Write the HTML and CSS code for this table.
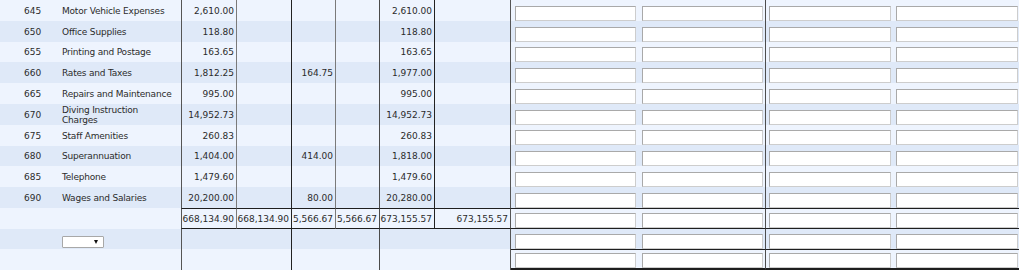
FILE: index.html
```html
<!DOCTYPE html>
<html lang="en">
<head>
<meta charset="utf-8">
<title>Trial balance worksheet</title>
<link rel="stylesheet" href="styles.css">
</head>
<body>
<div class="sheet">
  <table class="ledger">
    <colgroup>
      <col class="w-code"><col class="w-desc"><col class="w-amt"><col class="w-amt"><col class="w-narrow"><col class="w-narrow"><col class="w-amt"><col class="w-wide">
    </colgroup>
    <tbody>
      <tr class="light"><td class="code">645</td><td class="desc">Motor Vehicle Expenses</td><td class="num b1">2,610.00</td><td class="num b2"></td><td class="num b3"></td><td class="num b4"></td><td class="num b5">2,610.00</td><td class="num b6"></td></tr>
      <tr class="dark"><td class="code">650</td><td class="desc">Office Supplies</td><td class="num b1">118.80</td><td class="num b2"></td><td class="num b3"></td><td class="num b4"></td><td class="num b5">118.80</td><td class="num b6"></td></tr>
      <tr class="light"><td class="code">655</td><td class="desc">Printing and Postage</td><td class="num b1">163.65</td><td class="num b2"></td><td class="num b3"></td><td class="num b4"></td><td class="num b5">163.65</td><td class="num b6"></td></tr>
      <tr class="dark"><td class="code">660</td><td class="desc">Rates and Taxes</td><td class="num b1">1,812.25</td><td class="num b2"></td><td class="num b3">164.75</td><td class="num b4"></td><td class="num b5">1,977.00</td><td class="num b6"></td></tr>
      <tr class="light"><td class="code">665</td><td class="desc">Repairs and Maintenance</td><td class="num b1">995.00</td><td class="num b2"></td><td class="num b3"></td><td class="num b4"></td><td class="num b5">995.00</td><td class="num b6"></td></tr>
      <tr class="dark"><td class="code">670</td><td class="desc">Diving Instruction Charges</td><td class="num b1">14,952.73</td><td class="num b2"></td><td class="num b3"></td><td class="num b4"></td><td class="num b5">14,952.73</td><td class="num b6"></td></tr>
      <tr class="light"><td class="code">675</td><td class="desc">Staff Amenities</td><td class="num b1">260.83</td><td class="num b2"></td><td class="num b3"></td><td class="num b4"></td><td class="num b5">260.83</td><td class="num b6"></td></tr>
      <tr class="dark"><td class="code">680</td><td class="desc">Superannuation</td><td class="num b1">1,404.00</td><td class="num b2"></td><td class="num b3">414.00</td><td class="num b4"></td><td class="num b5">1,818.00</td><td class="num b6"></td></tr>
      <tr class="light"><td class="code">685</td><td class="desc">Telephone</td><td class="num b1">1,479.60</td><td class="num b2"></td><td class="num b3"></td><td class="num b4"></td><td class="num b5">1,479.60</td><td class="num b6"></td></tr>
      <tr class="dark"><td class="code">690</td><td class="desc">Wages and Salaries</td><td class="num b1">20,200.00</td><td class="num b2"></td><td class="num b3">80.00</td><td class="num b4"></td><td class="num b5">20,280.00</td><td class="num b6"></td></tr>
      <tr class="light total"><td class="code"></td><td class="desc"></td><td class="num b1">668,134.90</td><td class="num b2">668,134.90</td><td class="num b3">5,566.67</td><td class="num b4">5,566.67</td><td class="num b5">673,155.57</td><td class="num b6">673,155.57</td></tr>
      <tr class="dark"><td class="code"></td><td class="desc pick"><span class="select" role="combobox" aria-label="Account"><span class="caret"></span></span></td><td class="b1" colspan="2"></td><td class="b3" colspan="2"></td><td class="b5 b6" colspan="2"></td></tr>
      <tr class="light"><td class="code"></td><td class="desc"></td><td class="b1" colspan="2"></td><td class="b3" colspan="2"></td><td class="b5 b6" colspan="2"></td></tr>
    </tbody>
  </table>

  <table class="entry">
    <colgroup><col class="e-a"><col class="e-b"><col class="e-c"><col class="e-d"></colgroup>
    <tbody>
      <tr class="light"><td class="ea"><input type="text"></td><td class="eb"><input type="text"></td><td class="ec"><input type="text"></td><td class="ed"><input type="text"></td></tr>
      <tr class="dark"><td class="ea"><input type="text"></td><td class="eb"><input type="text"></td><td class="ec"><input type="text"></td><td class="ed"><input type="text"></td></tr>
      <tr class="light"><td class="ea"><input type="text"></td><td class="eb"><input type="text"></td><td class="ec"><input type="text"></td><td class="ed"><input type="text"></td></tr>
      <tr class="dark"><td class="ea"><input type="text"></td><td class="eb"><input type="text"></td><td class="ec"><input type="text"></td><td class="ed"><input type="text"></td></tr>
      <tr class="light"><td class="ea"><input type="text"></td><td class="eb"><input type="text"></td><td class="ec"><input type="text"></td><td class="ed"><input type="text"></td></tr>
      <tr class="dark"><td class="ea"><input type="text"></td><td class="eb"><input type="text"></td><td class="ec"><input type="text"></td><td class="ed"><input type="text"></td></tr>
      <tr class="light"><td class="ea"><input type="text"></td><td class="eb"><input type="text"></td><td class="ec"><input type="text"></td><td class="ed"><input type="text"></td></tr>
      <tr class="dark"><td class="ea"><input type="text"></td><td class="eb"><input type="text"></td><td class="ec"><input type="text"></td><td class="ed"><input type="text"></td></tr>
      <tr class="light"><td class="ea"><input type="text"></td><td class="eb"><input type="text"></td><td class="ec"><input type="text"></td><td class="ed"><input type="text"></td></tr>
      <tr class="dark"><td class="ea"><input type="text"></td><td class="eb"><input type="text"></td><td class="ec"><input type="text"></td><td class="ed"><input type="text"></td></tr>
      <tr class="light rule"><td class="ea"><input type="text"></td><td class="eb"><input type="text"></td><td class="ec"><input type="text"></td><td class="ed"><input type="text"></td></tr>
      <tr class="dark rule"><td class="ea"><input type="text"></td><td class="eb"><input type="text"></td><td class="ec"><input type="text"></td><td class="ed"><input type="text"></td></tr>
      <tr class="light rule last"><td class="ea"><input type="text"></td><td class="eb"><input type="text"></td><td class="ec"><input type="text"></td><td class="ed"><input type="text"></td></tr>
    </tbody>
  </table>
</div>
</body>
</html>
```

FILE: styles.css
```css
* { box-sizing: border-box; }

html, body {
  margin: 0;
  padding: 0;
  background: #ffffff;
}

body {
  font-family: "DejaVu Sans", Verdana, sans-serif;
  font-size: 9px;
  color: #2b2b2b;
}

.sheet {
  display: flex;
  align-items: flex-start;
}

table {
  border-collapse: separate;
  border-spacing: 0;
  table-layout: fixed;
}

tr { height: 20.75px; }

tr.light td { background: #eef4fe; }
tr.dark td { background: #dfe9f8; }

/* ---------- ledger (left) ---------- */
.ledger { width: 511px; }

.w-code { width: 60px; }
.w-desc { width: 121px; }
.w-amt { width: 55px; }
.w-narrow { width: 44px; }
.w-wide { width: 77px; }

.ledger td {
  padding: 1px 2px 0 0;
  vertical-align: middle;
  line-height: 10px;
  white-space: nowrap;
}

.ledger td.code { padding-left: 24px; }

.ledger td.desc {
  padding-left: 2px;
  padding-right: 6px;
  white-space: normal;
  letter-spacing: -0.2px;
}

.ledger td.num { text-align: right; }

.b1 { border-left: 1px solid #555555; }
.b2 { border-left: 1px solid #7a7a7a; }
.b3 { border-left: 1px solid #222222; }
.b4 { border-left: 1px solid #7a7a7a; }
.b5 { border-left: 1px solid #4a4a4a; }
.b6 { border-left: 1px solid #222222; border-right: 1px solid #555555; }
td.b5.b6 { border-left-color: #4a4a4a; }

.ledger tr.total td.num {
  border-top: 1px solid #1e1e1e;
  border-bottom: 1px solid #1e1e1e;
}

.ledger td.pick {
  vertical-align: bottom;
  padding-bottom: 1px;
}

.select {
  display: flex;
  align-items: center;
  justify-content: flex-end;
  width: 42px;
  height: 12px;
  padding-right: 5px;
  background: #ffffff;
  border: 1px solid #a8a8a8;
  border-radius: 1px;
}

.caret {
  width: 0;
  height: 0;
  border-left: 2.5px solid transparent;
  border-right: 2.5px solid transparent;
  border-top: 4px solid #111111;
}

/* ---------- entry grid (right) ---------- */
.entry { width: 508px; }

.e-a { width: 128px; }
.e-b { width: 126px; }
.e-c { width: 128px; }
.e-d { width: 126px; }

.entry td {
  padding: 0 0 0 3px;
  vertical-align: bottom;
}

.entry td.ea { padding-left: 4px; }
.entry td.ec { border-left: 1px solid #4d4d4d; }

.entry input {
  display: block;
  width: 121px;
  height: 15px;
  margin: 0;
  padding: 0 2px;
  font: inherit;
  background: #ffffff;
  border: 1px solid;
  border-color: #a9a9a9 #cdcdcd #cdcdcd #a9a9a9;
  border-radius: 0;
}

.entry td.ec input,
.entry td.ed input { width: 122px; }

.entry tr.rule td { border-top: 1px solid #1e1e1e; }
.entry tr.last td { border-bottom: 2px solid #1e1e1e; }
```
